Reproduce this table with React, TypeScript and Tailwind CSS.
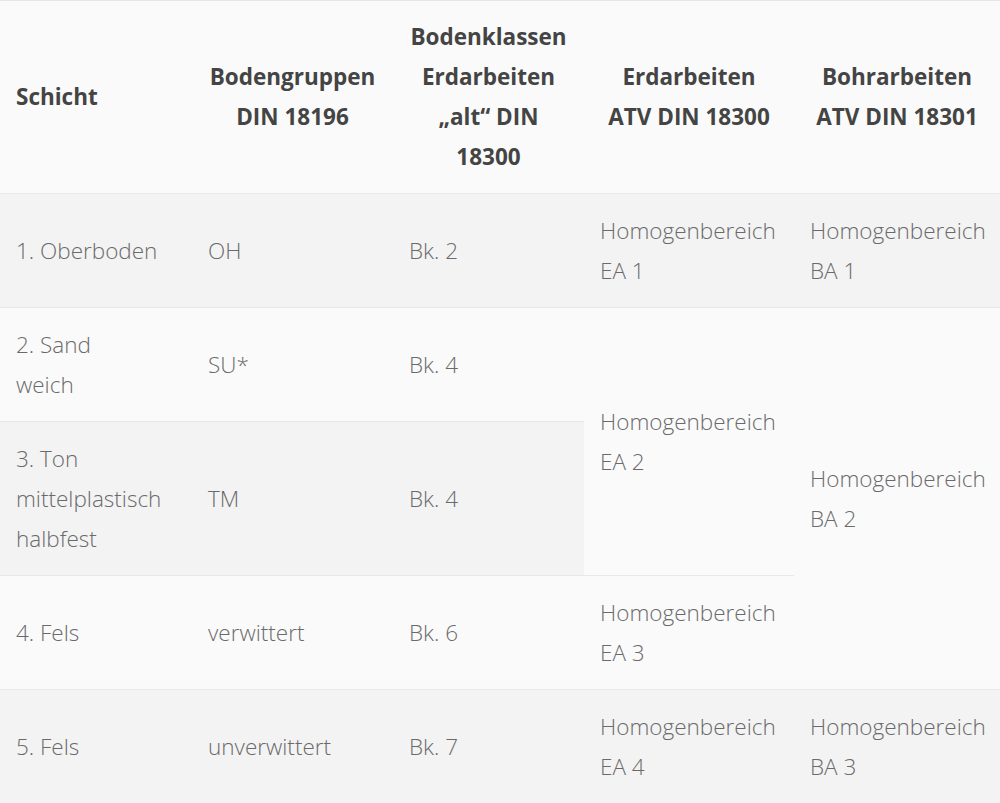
const font = { fontFamily: "'Open Sans', 'Noto Sans', sans-serif" };

type Cell = { text: string[]; rowSpan?: number };

const rows: { cells: Cell[]; striped: boolean }[] = [
  {
    striped: true,
    cells: [
      { text: ["1. Oberboden"] },
      { text: ["OH"] },
      { text: ["Bk. 2"] },
      { text: ["Homogenbereich", "EA 1"] },
      { text: ["Homogenbereich", "BA 1"] },
    ],
  },
  {
    striped: false,
    cells: [
      { text: ["2. Sand", "weich"] },
      { text: ["SU*"] },
      { text: ["Bk. 4"] },
      { text: ["Homogenbereich", "EA 2"], rowSpan: 2 },
      { text: ["Homogenbereich", "BA 2"], rowSpan: 3 },
    ],
  },
  {
    striped: true,
    cells: [
      { text: ["3. Ton", "mittelplastisch", "halbfest"] },
      { text: ["TM"] },
      { text: ["Bk. 4"] },
    ],
  },
  {
    striped: false,
    cells: [
      { text: ["4. Fels"] },
      { text: ["verwittert"] },
      { text: ["Bk. 6"] },
      { text: ["Homogenbereich", "EA 3"] },
    ],
  },
  {
    striped: true,
    cells: [
      { text: ["5. Fels"] },
      { text: ["unverwittert"] },
      { text: ["Bk. 7"] },
      { text: ["Homogenbereich", "EA 4"] },
      { text: ["Homogenbereich", "BA 3"] },
    ],
  },
];

const headers: string[][] = [
  ["Schicht"],
  ["Bodengruppen", "DIN 18196"],
  ["Bodenklassen", "Erdarbeiten", "„alt“ DIN", "18300"],
  ["Erdarbeiten", "ATV DIN 18300"],
  ["Bohrarbeiten", "ATV DIN 18301"],
];

function Lines({ text }: { text: string[] }) {
  return (
    <>
      {text.map((t, i) => (
        <span key={i} className="block whitespace-nowrap">
          {t}
        </span>
      ))}
    </>
  );
}

export default function App() {
  return (
    <div className="min-h-screen bg-[#fafafa]" style={font}>
      <table className="w-[1000px] table-fixed border-collapse border-t border-[#e6e6e6] text-[22.5px] leading-[40px]">
        <colgroup>
          <col className="w-[192px]" />
          <col className="w-[201px]" />
          <col className="w-[191px]" />
          <col className="w-[210px]" />
          <col className="w-[206px]" />
        </colgroup>
        <thead>
          <tr className="bg-[#fafafa]">
            {headers.map((h, i) => (
              <th
                key={i}
                className={
                  "px-4 py-4 align-middle font-bold text-[#444444] " +
                  (i === 0 ? "text-left" : "text-center")
                }
              >
                <Lines text={h} />
              </th>
            ))}
          </tr>
        </thead>
        <tbody>
          {rows.map((r, ri) => (
            <tr key={ri} className={r.striped ? "bg-[#f3f3f3]" : "bg-[#fafafa]"}>
              {r.cells.map((c, ci) => (
                <td
                  key={ci}
                  rowSpan={c.rowSpan}
                  className="border-t border-[#e8e8e8] px-4 pt-[17px] pb-4 align-middle font-light text-[#6a6a6a]"
                >
                  <Lines text={c.text} />
                </td>
              ))}
            </tr>
          ))}
        </tbody>
      </table>
    </div>
  );
}
